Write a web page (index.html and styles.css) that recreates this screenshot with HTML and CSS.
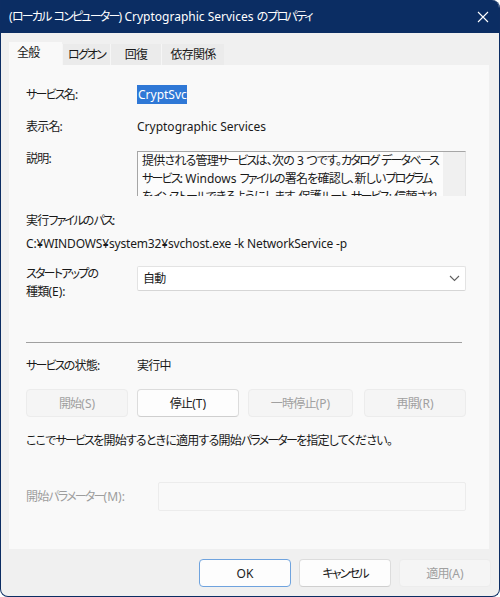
FILE: index.html
```html
<!DOCTYPE html>
<html lang="ja">
<head>
<meta charset="utf-8">
<link rel="stylesheet" href="styles.css">
</head>
<body>
<div class="window">
  <div class="titlebar">
    <span class="title">(<span class="k">ローカル</span> <span class="k">コンピューター</span>) <span class="en">Cryptographic Services</span> の<span class="k">プロパティ</span></span>
    <svg class="close" width="12" height="12" viewBox="0 0 12 12"><path d="M1 1 L11 11 M11 1 L1 11" stroke="#ffffff" stroke-width="1.1" fill="none"/></svg>
  </div>
  <div class="tabs">
    <div class="tab active">全般</div>
    <div class="tab"><span class="k">ログオン</span></div>
    <div class="tab">回復</div>
    <div class="tab">依存関係</div>
  </div>
  <div class="panel">
    <div class="row r-name">
      <span class="label"><span class="k">サービス</span>名:</span>
      <span class="value"><span class="sel en">CryptSvc</span></span>
    </div>
    <div class="row r-disp">
      <span class="label">表示名:</span>
      <span class="value en">Cryptographic Services</span>
    </div>
    <div class="row r-desc">
      <span class="label">説明:</span>
      <div class="desc">
        <div class="desc-text">
          <div class="line">提供される管理<span class="k">サービス</span>は、次の 3 つです。<span class="k">カタログ</span> <span class="k">データベース</span></div>
          <div class="line"><span class="k">サービス</span>: <span class="en">Windows</span> <span class="k">ファイル</span>の署名を確認し、新しい<span class="k">プログラム</span></div>
          <div class="line">を<span class="k">インストール</span>できるようにします。保護<span class="k">ルート</span> <span class="k">サービス</span>: 信頼され</div>
        </div>
        <div class="scroll"></div>
      </div>
    </div>
    <div class="plain r-pathlabel">実行<span class="k">ファイル</span>の<span class="k">パス</span>:</div>
    <div class="plain r-path">C:¥WINDOWS¥system32¥svchost.exe -k NetworkService -p</div>
    <div class="row r-startup">
      <span class="label two"><span class="k">スタートアップ</span>の<br>種類<span class="en">(E):</span></span>
      <div class="combo">
        <span>自動</span>
        <svg width="11" height="7" viewBox="0 0 11 7"><path d="M1 1 L5.5 5.5 L10 1" stroke="#5f5f5f" stroke-width="1.1" fill="none"/></svg>
      </div>
    </div>
    <div class="sep"></div>
    <div class="row r-state">
      <span class="label"><span class="k">サービス</span>の状態:</span>
      <span class="value">実行中</span>
    </div>
    <div class="btnrow">
      <div class="btn disabled">開始<span class="en">(S)</span></div>
      <div class="btn">停止<span class="en">(T)</span></div>
      <div class="btn disabled b3">一時停止<span class="en">(P)</span></div>
      <div class="btn disabled b4">再開<span class="en">(R)</span></div>
    </div>
    <div class="plain r-hint">ここで<span class="k">サービス</span>を開始するときに適用する開始<span class="k">パラメーター</span>を指定してください。</div>
    <div class="row r-param">
      <span class="label dim wide">開始<span class="k">パラメーター</span><span class="en">(M):</span></span>
      <div class="input"></div>
    </div>
  </div>
  <div class="footer">
    <div class="btn fbtn default en">OK</div>
    <div class="btn fbtn"><span class="k">キャンセル</span></div>
    <div class="btn fbtn disabled">適用<span class="en">(A)</span></div>
  </div>
</div>
</body>
</html>
```
FILE: styles.css
```css
html, body {
  margin: 0;
  padding: 0;
  background: #ffffff;
}
body {
  font-family: "Noto Sans", "Noto Sans CJK JP", sans-serif;
  font-size: 12px;
  font-feature-settings: "palt";
  letter-spacing: -0.8px;
  word-spacing: 0.8px;
  color: #1a1a1a;
}
.k { letter-spacing: -1.8px; }
.en { letter-spacing: 0; word-spacing: 0; }
.window {
  width: 500px;
  height: 597px;
  box-sizing: border-box;
  background: #f0f0f0;
  border: 1px solid #0c2d63;
  border-top: none;
  border-radius: 0 8px 8px 8px;
  overflow: hidden;
  display: flex;
  flex-direction: column;
}
.titlebar {
  height: 33px;
  flex: none;
  background: #0b2d63;
  color: #ffffff;
  display: flex;
  align-items: center;
  justify-content: space-between;
  padding: 0 11px 0 9px;
  margin: 0 -1px;
}
.title {
  font-size: 12px;
  line-height: 16px;
}
.close { display: block; }
.tabs {
  height: 23px;
  flex: none;
  margin-top: 9px;
  padding-left: 8px;
  display: flex;
  align-items: flex-end;
}
.tab {
  height: 21px;
  line-height: 21px;
  background: #ebebeb;
  color: #1a1a1a;
  text-align: center;
  border-left: 1px solid #f6f6f6;
}
.tab:nth-child(2) { width: 47px; }
.tab:nth-child(3) { width: 50px; }
.tab:nth-child(4) { width: 62px; }
.tab.active {
  height: 23px;
  line-height: 21px;
  width: 53px;
  background: #f9f9f9;
  border-left: none;
  text-align: left;
  box-sizing: border-box;
  padding-left: 8px;
}
.panel {
  flex: none;
  height: 484px;
  margin: 0 10px 0 8px;
  background: #f9f9f9;
  padding: 20px 22px 0 17px;
  box-sizing: border-box;
  display: flex;
  flex-direction: column;
}
.row {
  display: flex;
  align-items: center;
  line-height: 20px;
}
.label {
  width: 111px;
  flex: none;
  color: #1a1a1a;
}
.label.wide { width: 132px; }
.label.dim { color: #9d9d9d; }
.value { color: #1a1a1a; }
.sel {
  background: #2f78d6;
  color: #ffffff;
  padding: 1px 0 1px 1px;
}
.r-disp { margin-top: 12px; }
.r-desc {
  margin-top: 14px;
  align-items: flex-start;
}
.r-desc .label { line-height: 16px; }
.desc {
  width: 329px;
  height: 45px;
  box-sizing: border-box;
  border-top: 1px solid #a6a6a6;
  border-left: 1px solid #a6a6a6;
  border-right: 1px solid #e4e4e4;
  background: #fcfcfc;
  display: flex;
  overflow: hidden;
}
.desc-text {
  flex: 1;
  padding: 0 0 0 4px;
  line-height: 18px;
  overflow: hidden;
}
.line { white-space: nowrap; }
.scroll {
  width: 22px;
  flex: none;
  background: #f0f0f0;
}
.plain { line-height: 20px; white-space: nowrap; }
.r-pathlabel { margin-top: 15px; }
.r-path { margin-top: 3px; letter-spacing: -0.16px; word-spacing: 0; }
.r-startup {
  margin-top: 11px;
  align-items: flex-start;
}
.label.two { line-height: 18px; }
.combo {
  margin-top: 1px;
  width: 329px;
  height: 25px;
  box-sizing: border-box;
  background: #ffffff;
  border: 1px solid #e3e3e3;
  border-bottom-color: #d6d6d6;
  border-radius: 2px;
  display: flex;
  align-items: center;
  justify-content: space-between;
  padding: 0 5px 0 5px;
}
.sep {
  margin-top: 41px;
  height: 1px;
  background: #a0a0a0;
  margin-right: 5px;
}
.r-state { margin-top: 13px; }
.btnrow {
  margin-top: 13px;
  display: flex;
  gap: 9px;
}
.btn {
  width: 102px;
  height: 28px;
  box-sizing: border-box;
  background: #fdfdfd;
  border: 1px solid #dcdcdc;
  border-bottom-color: #cfcfcf;
  border-radius: 4px;
  display: flex;
  align-items: center;
  justify-content: center;
  color: #1a1a1a;
}
.btn.b3 { width: 105px; }
.btn.b4 { margin-left: 2px; }
.btn.disabled {
  background: #f5f5f5;
  border-color: #ececec;
  color: #a0a0a0;
}
.r-hint { margin-top: 14px; }
.r-param { margin-top: 31px; }
.input {
  width: 308px;
  height: 29px;
  box-sizing: border-box;
  border: 1px solid #ececec;
  background: #f9f9f9;
  border-radius: 2px;
}
.footer {
  flex: 1;
  display: flex;
  justify-content: flex-end;
  gap: 8px;
  padding: 10px 8px 0 0;
}
.fbtn {
  width: 92px;
}
.fbtn.default {
  border: 1px solid #6fa3de;
}
```
